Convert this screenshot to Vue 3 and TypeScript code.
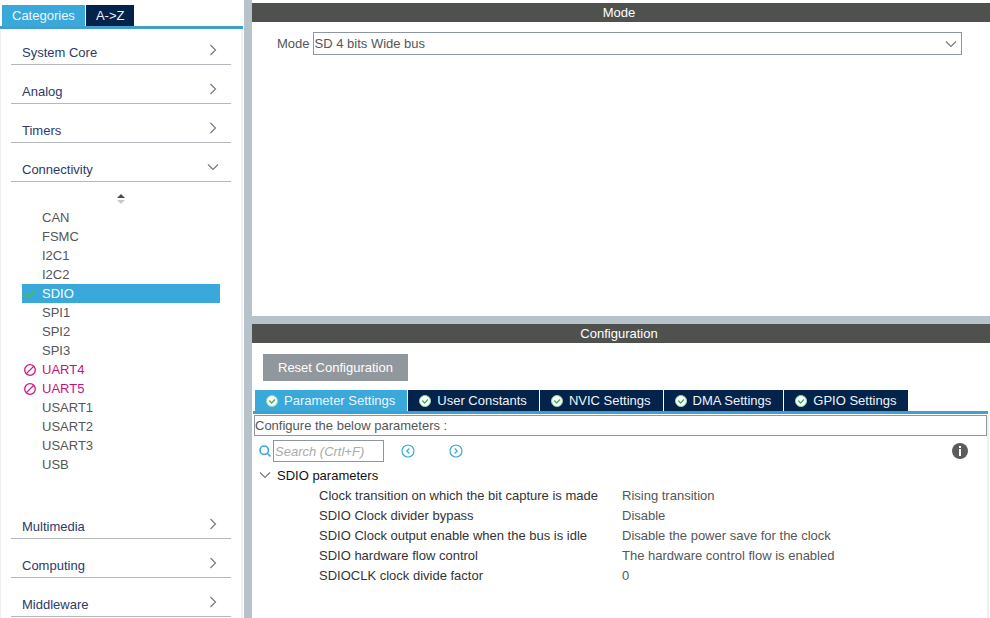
<script setup lang="ts">
import { ref } from 'vue'

interface Peripheral {
  name: string
  state?: 'enabled' | 'conflict'
}

interface Category {
  name: string
  items: Peripheral[]
}

interface Parameter {
  label: string
  value: string
}

const categories: Category[] = [
  { name: 'System Core', items: [] },
  { name: 'Analog', items: [] },
  { name: 'Timers', items: [] },
  {
    name: 'Connectivity',
    items: [
      { name: 'CAN' },
      { name: 'FSMC' },
      { name: 'I2C1' },
      { name: 'I2C2' },
      { name: 'SDIO', state: 'enabled' },
      { name: 'SPI1' },
      { name: 'SPI2' },
      { name: 'SPI3' },
      { name: 'UART4', state: 'conflict' },
      { name: 'UART5', state: 'conflict' },
      { name: 'USART1' },
      { name: 'USART2' },
      { name: 'USART3' },
      { name: 'USB' },
    ],
  },
  { name: 'Multimedia', items: [] },
  { name: 'Computing', items: [] },
  { name: 'Middleware', items: [] },
]

const views = ['Categories', 'A->Z']
const settingTabs = [
  'Parameter Settings',
  'User Constants',
  'NVIC Settings',
  'DMA Settings',
  'GPIO Settings',
]

const parameters: Parameter[] = [
  { label: 'Clock transition on which the bit capture is made', value: 'Rising transition' },
  { label: 'SDIO Clock divider bypass', value: 'Disable' },
  { label: 'SDIO Clock output enable when the bus is idle', value: 'Disable the power save for the clock' },
  { label: 'SDIO hardware flow control', value: 'The hardware control flow is enabled' },
  { label: 'SDIOCLK clock divide factor', value: '0' },
]

const activeView = ref('Categories')
const openCategory = ref('Connectivity')
const selected = ref('SDIO')
const activeTab = ref('Parameter Settings')
const mode = ref('SD 4 bits Wide bus')
const query = ref('')
const groupOpen = ref(true)

function toggleCategory(name: string) {
  openCategory.value = openCategory.value === name ? '' : name
}
</script>

<template>
  <div class="workspace">
    <aside class="sidebar">
      <div class="tabs view-tabs" role="tablist">
        <button
          v-for="view in views"
          :key="view"
          type="button"
          role="tab"
          class="tab"
          :class="{ active: activeView === view }"
          :aria-selected="activeView === view"
          @click="activeView = view"
        >{{ view }}</button>
      </div>

      <nav class="categories">
        <section v-for="category in categories" :key="category.name">
          <button
            type="button"
            class="category"
            :aria-expanded="openCategory === category.name"
            @click="toggleCategory(category.name)"
          >
            <span>{{ category.name }}</span>
            <svg class="chevron" :class="{ open: openCategory === category.name }" viewBox="0 0 12 12" aria-hidden="true">
              <path d="M3.5 1 L8.5 6 L3.5 11" />
            </svg>
          </button>

          <div v-if="openCategory === category.name && category.items.length" class="peripherals">
            <button type="button" class="sorter" aria-label="Sort">
              <svg viewBox="0 0 10 12" aria-hidden="true">
                <path d="M1 5 L5 1 L9 5 Z" fill="#4b4b4b" />
                <path d="M1 7 L5 11 L9 7 Z" fill="#c9c9c9" />
              </svg>
            </button>
            <ul>
              <li v-for="item in category.items" :key="item.name">
                <button
                  type="button"
                  class="peripheral"
                  :class="[item.state, { selected: selected === item.name }]"
                  @click="selected = item.name"
                >
                  <span class="status">
                    <svg v-if="item.state === 'enabled'" viewBox="0 0 12 12" aria-hidden="true">
                      <path d="M1 5.5 L4.5 9 L11 2" fill="none" stroke="#45b57c" stroke-width="2.6" />
                    </svg>
                    <svg v-else-if="item.state === 'conflict'" viewBox="0 0 12 12" aria-hidden="true">
                      <circle cx="6" cy="6" r="5.3" fill="none" stroke="#d4127f" stroke-width="1.3" />
                      <path d="M2.4 9.6 L9.6 2.4" stroke="#d4127f" stroke-width="1.3" />
                    </svg>
                  </span>
                  {{ item.name }}
                </button>
              </li>
            </ul>
          </div>
        </section>
      </nav>
    </aside>

    <main class="panels">
      <section class="mode-panel">
        <h2 class="panel-title">Mode</h2>
        <div class="mode-row">
          <label for="mode">Mode</label>
          <div class="select-box">
            <select id="mode" v-model="mode">
              <option>Disable</option>
              <option>SD 1 bit</option>
              <option>SD 4 bits Wide bus</option>
            </select>
            <svg class="chevron open" viewBox="0 0 12 12" aria-hidden="true">
              <path d="M3.5 1 L8.5 6 L3.5 11" />
            </svg>
          </div>
        </div>
      </section>

      <section class="config-panel">
        <h2 class="panel-title">Configuration</h2>
        <button type="button" class="reset">Reset Configuration</button>

        <div class="tabs setting-tabs" role="tablist">
          <button
            v-for="tab in settingTabs"
            :key="tab"
            type="button"
            role="tab"
            class="tab"
            :class="{ active: activeTab === tab }"
            :aria-selected="activeTab === tab"
            @click="activeTab = tab"
          >
            <svg viewBox="0 0 12 12" aria-hidden="true">
              <circle cx="6" cy="6" r="5.5" fill="#f8fff8" stroke="#9ad6a8" stroke-width="1" />
              <path d="M3.2 5.6 L5.6 8 L9 4.4" fill="none" stroke="#4fa86a" stroke-width="1.4" />
            </svg>
            {{ tab }}
          </button>
        </div>

        <div class="settings">
          <p class="hint">Configure the below parameters :</p>

          <div class="toolbar">
            <label for="search" aria-label="Search">
              <svg class="magnifier" viewBox="0 0 12 12" aria-hidden="true">
                <circle cx="5.2" cy="5.2" r="4.2" />
                <path d="M8.2 8.2 L11.4 11.4" />
              </svg>
            </label>
            <input id="search" v-model="query" type="text" placeholder="Search (Crtl+F)" />
            <button type="button" class="step" aria-label="Previous">
              <svg viewBox="0 0 14 14" aria-hidden="true">
                <circle cx="7" cy="7" r="6" />
                <path d="M8.3 4.5 L5.8 7 L8.3 9.5" />
              </svg>
            </button>
            <button type="button" class="step" aria-label="Next">
              <svg viewBox="0 0 14 14" aria-hidden="true">
                <circle cx="7" cy="7" r="6" />
                <path d="M5.7 4.5 L8.2 7 L5.7 9.5" />
              </svg>
            </button>
            <button type="button" class="info" aria-label="Information">
              <svg viewBox="0 0 16 16" aria-hidden="true">
                <circle cx="8" cy="8" r="8" fill="#5b5b5b" />
                <path d="M7 3 H9 V5 H7 Z M7 6 H9 V13 H7 Z" fill="#fff" />
              </svg>
            </button>
          </div>

          <button type="button" class="group" :aria-expanded="groupOpen" @click="groupOpen = !groupOpen">
            <svg class="chevron" :class="{ open: groupOpen }" viewBox="0 0 12 12" aria-hidden="true">
              <path d="M3.5 1 L8.5 6 L3.5 11" />
            </svg>
            SDIO parameters
          </button>
          <table v-if="groupOpen" class="parameters">
            <tbody>
              <tr v-for="parameter in parameters" :key="parameter.label">
                <th scope="row">{{ parameter.label }}</th>
                <td>{{ parameter.value }}</td>
              </tr>
            </tbody>
          </table>
        </div>
      </section>
    </main>
  </div>
</template>

<style>
body {
  margin: 0;
  background: #fff;
}
</style>

<style scoped>
.workspace {
  display: grid;
  grid-template-columns: 244px minmax(0, 1fr);
  min-height: 100vh;
  font-family: 'Liberation Sans', Arial, sans-serif;
  font-size: 13px;
  line-height: 19px;
  color: #555658;
}

.workspace * {
  box-sizing: border-box;
}

button,
input,
select {
  margin: 0;
  padding: 0;
  border: 0;
  border-radius: 0;
  background: none;
  color: inherit;
  font: inherit;
}

svg {
  display: block;
  flex: none;
  width: 12px;
  height: 12px;
}

.chevron {
  fill: none;
  stroke: #77797c;
  stroke-width: 1.2;
}

.chevron.open {
  transform: rotate(90deg);
}

.sidebar {
  display: flex;
  flex-direction: column;
  padding: 5px 1px 0 0;
}

.tabs {
  display: flex;
  gap: 1px;
  border-bottom: 3px solid #3f9fcd;
}

.tab {
  display: flex;
  align-items: center;
  height: 21px;
  background: #03234b;
  color: #f0f4f8;
}

.tab.active {
  background: #39a9dc;
}

.view-tabs {
  padding-left: 2px;
}

.view-tabs .tab {
  padding: 0 10px;
}

.categories {
  display: flex;
  flex: 1;
  flex-direction: column;
  gap: 13px;
  padding: 10px 10px 0 10px;
  border-left: 1px solid #eef1f3;
  border-right: 2px solid #eef1f3;
}

.category {
  display: flex;
  align-items: center;
  justify-content: space-between;
  width: 100%;
  height: 26px;
  padding: 2px 12px 0 11px;
  border-bottom: 1px solid #b4b9bd;
  color: #2c3a6c;
}

.category .chevron {
  margin-bottom: 5px;
}

.peripherals {
  padding: 11px 11px 26px;
}

.sorter {
  display: block;
  margin: 0 auto 3px;
}

.sorter svg {
  width: 10px;
}

.peripherals ul {
  margin: 0;
  padding: 0;
  list-style: none;
}

.peripheral {
  display: flex;
  align-items: center;
  gap: 6px;
  width: 100%;
  height: 19px;
  padding-left: 2px;
}

.peripheral.conflict {
  color: #c8107c;
}

.peripheral.selected {
  background: #39a9dc;
  color: #fff;
}

.status {
  width: 12px;
}

.panels {
  display: flex;
  flex-direction: column;
  border-left: 8px solid #b7c3cb;
}

.mode-panel {
  flex: 313 1 0;
  padding-top: 3px;
  border-bottom: 8px solid #b7c3cb;
}

.panel-title {
  margin: 0;
  height: 19px;
  padding-right: 4px;
  background: #4f514f;
  color: #fff;
  font-size: 13px;
  font-weight: normal;
  text-align: center;
}

.mode-row {
  display: flex;
  align-items: center;
  gap: 3px;
  padding: 10px 28px 0 25px;
}

.select-box {
  display: grid;
  flex: 1;
  align-items: center;
  height: 23px;
  border: 1px solid #8f979e;
}

.select-box > * {
  grid-area: 1 / 1;
}

.select-box select {
  width: 100%;
  height: 21px;
  padding: 0 20px 0 1px;
  appearance: none;
}

.select-box .chevron {
  justify-self: end;
  margin-right: 4px;
  pointer-events: none;
}

.config-panel {
  display: flex;
  flex: 294 1 0;
  flex-direction: column;
}

.reset {
  align-self: flex-start;
  height: 27px;
  margin: 11px 11px 9px;
  padding: 0 15px;
  background: #90989e;
  color: #fff;
}

.setting-tabs {
  margin: 0 2px 0 1px;
  padding-left: 2px;
}

.setting-tabs .tab {
  gap: 6px;
  padding: 0 12px 0 11px;
}

.settings {
  flex: 1;
  margin: 0 1px;
  padding: 1px 0 0 1px;
  border-right: 2px solid #eef1f3;
}

.hint {
  margin: 0;
  height: 21px;
  border: 1px solid #8f979e;
}

.toolbar {
  display: flex;
  align-items: center;
  height: 22px;
  margin: 4px 19px 3px 5px;
}

.magnifier {
  fill: none;
  stroke: #39a9dc;
  stroke-width: 1.6;
}

.toolbar input {
  width: 111px;
  height: 22px;
  margin: 0 17px 0 2px;
  padding: 0 1px;
  border: 1px solid #8f979e;
}

.toolbar input::placeholder {
  color: #a9abad;
  font-style: italic;
  opacity: 1;
}

.step {
  margin-right: 34px;
}

.step svg {
  width: 14px;
  height: 14px;
  fill: none;
  stroke: #39a9dc;
  stroke-width: 1.2;
}

.info {
  margin-left: auto;
}

.info svg {
  width: 16px;
  height: 16px;
}

.group {
  display: flex;
  align-items: center;
  gap: 6px;
  height: 20px;
  margin-bottom: 1px;
  padding-left: 5px;
  color: #111;
}

.parameters {
  margin-left: 65px;
  border-collapse: collapse;
}

.parameters th,
.parameters td {
  height: 20px;
  padding: 0;
  font-weight: normal;
  text-align: left;
  line-height: 20px;
}

.parameters th {
  min-width: 303px;
  color: #333436;
}
</style>
